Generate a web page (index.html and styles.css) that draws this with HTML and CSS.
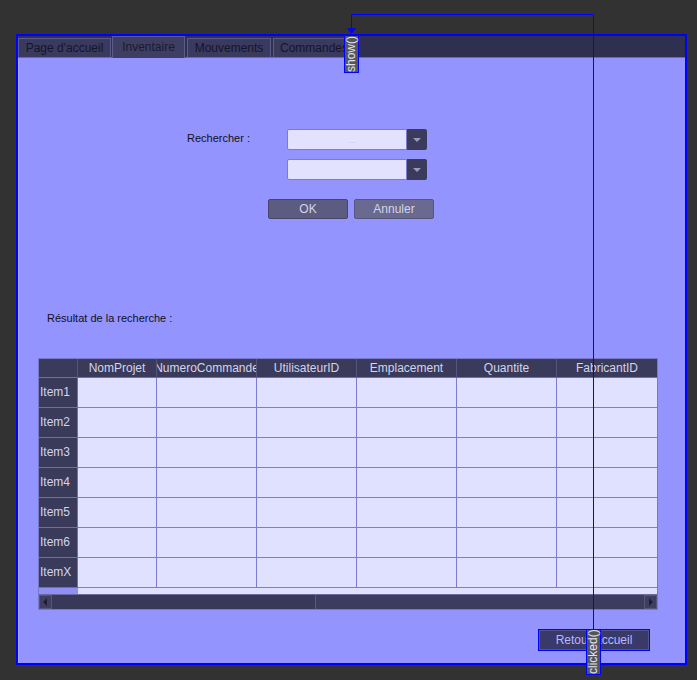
FILE: index.html
```html
<!DOCTYPE html>
<html lang="fr">

<head>
    <meta charset="UTF-8">
    <meta name="viewport" content="width=device-width, initial-scale=1.0">
    <title>Inventaire - Designer</title>
    <link rel="stylesheet" href="styles.css">
</head>

<body>
    <!-- Designer canvas holding the form -->
    <div class="canvas">
        <div class="form">
            <!-- Tab bar -->
            <div class="tab-bar">
                <div class="tab tab-home">Page d'accueil</div>
                <div class="tab tab-current">Inventaire</div>
                <div class="tab tab-moves">Mouvements</div>
                <div class="tab tab-orders">Commandes</div>
            </div>

            <!-- Inventaire page -->
            <div class="page">
                <div class="search">
                    <span class="search-label">Rechercher :</span>
                    <div class="combo">
                        <span class="combo-field"><span class="combo-dots">...</span></span>
                        <span class="combo-arrow"></span>
                    </div>
                    <span></span>
                    <div class="combo">
                        <span class="combo-field"></span>
                        <span class="combo-arrow"></span>
                    </div>
                </div>

                <div class="actions">
                    <div class="button button-ok">OK</div>
                    <div class="button button-cancel">Annuler</div>
                </div>

                <div class="result-label">Résultat de la recherche :</div>

                <div class="table-view">
                    <div class="grid-row header-row">
                        <div class="corner"></div>
                        <div class="col-head">NomProjet</div>
                        <div class="col-head col-clip"><span>NumeroCommande</span></div>
                        <div class="col-head">UtilisateurID</div>
                        <div class="col-head">Emplacement</div>
                        <div class="col-head">Quantite</div>
                        <div class="col-head col-last">FabricantID</div>
                    </div>
                    <div class="grid-row"><div class="row-head">Item1</div><div class="cell"></div><div class="cell"></div><div class="cell"></div><div class="cell"></div><div class="cell"></div><div class="cell col-last"></div></div>
                    <div class="grid-row"><div class="row-head">Item2</div><div class="cell"></div><div class="cell"></div><div class="cell"></div><div class="cell"></div><div class="cell"></div><div class="cell col-last"></div></div>
                    <div class="grid-row"><div class="row-head">Item3</div><div class="cell"></div><div class="cell"></div><div class="cell"></div><div class="cell"></div><div class="cell"></div><div class="cell col-last"></div></div>
                    <div class="grid-row"><div class="row-head">Item4</div><div class="cell"></div><div class="cell"></div><div class="cell"></div><div class="cell"></div><div class="cell"></div><div class="cell col-last"></div></div>
                    <div class="grid-row"><div class="row-head">Item5</div><div class="cell"></div><div class="cell"></div><div class="cell"></div><div class="cell"></div><div class="cell"></div><div class="cell col-last"></div></div>
                    <div class="grid-row"><div class="row-head">Item6</div><div class="cell"></div><div class="cell"></div><div class="cell"></div><div class="cell"></div><div class="cell"></div><div class="cell col-last"></div></div>
                    <div class="grid-row"><div class="row-head">ItemX</div><div class="cell"></div><div class="cell"></div><div class="cell"></div><div class="cell"></div><div class="cell"></div><div class="cell col-last"></div></div>
                    <div class="grid-rest">
                        <div class="rest-head"></div>
                        <div class="rest-body"></div>
                    </div>
                    <div class="scrollbar">
                        <div class="scroll-btn scroll-left"></div>
                        <div class="scroll-track"></div>
                        <div class="scroll-handle"></div>
                        <div class="scroll-btn scroll-right"></div>
                    </div>
                </div>

                <div class="footer">
                    <div class="button-back">Retour accueil</div>
                </div>
            </div>
        </div>

        <!-- Signal / slot connection drawn over the form -->
        <svg class="connection" width="697" height="680" viewBox="0 0 697 680">
            <polyline points="593.5,629 593.5,14.5 351.5,14.5 351.5,28" fill="none" stroke="#0000ff" stroke-width="1" />
            <polygon points="347,28 356,28 351.5,34" fill="#0000ff" />
        </svg>
        <div class="slot-label slot-show">show()</div>
        <div class="slot-label slot-clicked">clicked()</div>
    </div>
</body>

</html>
```

FILE: styles.css
```css
body {
    margin: 0;
    background-color: #323232;
    font-family: "Liberation Sans", Arial, sans-serif;
    font-size: 11px;
}

/* Designer canvas */
.canvas {
    position: relative;
    width: 697px;
    height: 680px;
    padding: 34px 0 0 16px;
    box-sizing: border-box;
}

.form {
    width: 671px;
    height: 631px;
    box-sizing: border-box;
    border: 2px solid #0000ff;
    background-color: #9494ff;
    display: flex;
    flex-direction: column;
}

/* Tabs */
.tab-bar {
    display: flex;
    align-items: flex-end;
    height: 21px;
    background-color: #2f2f4f;
    border-bottom: 1px solid #6a6aa8;
    gap: 1px;
}

.tab {
    height: 19px;
    line-height: 18px;
    box-sizing: border-box;
    padding: 0;
    background-color: #3a3a5e;
    border: 1px solid #5c5c8c;
    border-bottom: none;
    color: #15152a;
    font-size: 12px;
    white-space: nowrap;
    text-align: center;
}

.tab-home {
    width: 93px;
}

.tab-current {
    width: 73px;
    height: 22px;
    line-height: 20px;
    background-color: #3e3e62;
    margin-bottom: -1px;
    color: #1a1a30;
}

.tab-moves {
    width: 84px;
    margin-left: 1px;
}

.tab-orders {
    width: 82px;
    margin-left: 1px;
}

/* Page content */
.page {
    flex: 1;
    display: flex;
    flex-direction: column;
    border-left: 1px solid #a6a6ff;
}

.search {
    display: grid;
    grid-template-columns: 100px 140px;
    row-gap: 9px;
    margin: 71px 0 0 168px;
    align-items: center;
}

.search-label {
    color: #101020;
    margin-top: -3px;
}

.combo {
    display: flex;
    height: 21px;
}

.combo-field {
    flex: 1;
    background-color: #e2e2ff;
    border: 1px solid #7c7cc8;
    border-radius: 2px 0 0 2px;
    display: flex;
    justify-content: center;
    align-items: center;
}

.combo-dots {
    color: #c4c4e4;
    font-size: 9px;
    margin-left: 10px;
}

.combo-arrow {
    width: 20px;
    background-color: #3a3a5c;
    border-radius: 0 2px 2px 0;
    position: relative;
}

.combo-arrow::after {
    content: "";
    position: absolute;
    left: 6px;
    top: 9px;
    border-left: 4px solid transparent;
    border-right: 4px solid transparent;
    border-top: 4px solid #9a9ab8;
}

.actions {
    display: flex;
    gap: 6px;
    margin: 19px 0 0 249px;
}

.button {
    width: 80px;
    height: 20px;
    line-height: 18px;
    box-sizing: border-box;
    border: 1px solid #46466a;
    border-radius: 2px;
    text-align: center;
    color: #d4d4e8;
    font-size: 12px;
}

.button-ok {
    background-color: #5c5c80;
}

.button-cancel {
    background-color: #6a6a90;
    border-color: #56567c;
}

.result-label {
    margin: 93px 0 0 28px;
    color: #101020;
}

/* Table view */
.table-view {
    width: 620px;
    margin: 34px 0 0 19px;
    border: 1px solid #7878c8;
    box-sizing: border-box;
    background-color: #e0e0ff;
}

.grid-row {
    display: grid;
    grid-template-columns: 39px 79px 100px 100px 100px 100px 100px;
    height: 30px;
}

.header-row {
    height: 19px;
    background-color: #3a3a5a;
    color: #d4d4ee;
    font-size: 12px;
}

.corner,
.col-head {
    border-right: 1px solid #55557a;
    border-bottom: 1px solid #6e6ea8;
    line-height: 18px;
    text-align: center;
    overflow: hidden;
    white-space: nowrap;
}

.col-clip {
    display: flex;
    justify-content: center;
}

.col-head.col-last,
.cell.col-last {
    border-right: none;
}

.row-head {
    background-color: #3a3a5a;
    color: #d4d4ee;
    font-size: 12px;
    line-height: 29px;
    padding-left: 1px;
    border-right: 1px solid #6e6ea8;
    border-bottom: 1px solid #6e6ea8;
}

.cell {
    border-right: 1px solid #7c7cd8;
    border-bottom: 1px solid #7c7cd8;
}

.grid-rest {
    display: flex;
    height: 6px;
}

.rest-head {
    width: 39px;
    background-color: #9090f4;
}

.rest-body {
    flex: 1;
}

.scrollbar {
    display: flex;
    height: 14px;
    background-color: #3a3a5a;
    border-top: 1px solid #6a6aa0;
}

.scroll-btn {
    width: 13px;
    background-color: #3e3e60;
    border: 1px solid #55557c;
    box-sizing: border-box;
    position: relative;
}

.scroll-left::after,
.scroll-right::after {
    content: "";
    position: absolute;
    top: 2px;
    border-top: 4px solid transparent;
    border-bottom: 4px solid transparent;
}

.scroll-left::after {
    left: 3px;
    border-right: 4px solid #1e1e30;
}

.scroll-right::after {
    left: 4px;
    border-left: 4px solid #1e1e30;
}

.scroll-track {
    width: 263px;
    background-color: #383858;
    border-right: 1px solid #5a5a86;
}

.scroll-handle {
    flex: 1;
    background-color: #3c3c5e;
}

/* Bottom button */
.footer {
    display: flex;
    margin: 19px 0 0 519px;
}

.button-back {
    width: 112px;
    height: 22px;
    box-sizing: border-box;
    border: 1px solid #0000ff;
    background-color: #3a3a6a;
    box-shadow: inset 0 0 0 1px #55558a;
    color: #b8b8ff;
    font-size: 12px;
    line-height: 20px;
    text-align: center;
}

/* Connection overlay */
.connection {
    position: absolute;
    left: 0;
    top: 0;
    pointer-events: none;
}

.slot-label {
    position: absolute;
    writing-mode: vertical-rl;
    transform: rotate(180deg);
    background-color: #555560;
    border: 1px solid #0000ff;
    color: #e4e4e4;
    font-size: 12px;
    line-height: 12px;
    text-align: center;
    box-sizing: border-box;
    width: 15px;
}

.slot-show {
    left: 344px;
    top: 35px;
    height: 38px;
}

.slot-clicked {
    left: 586px;
    top: 629px;
    height: 46px;
}
```
